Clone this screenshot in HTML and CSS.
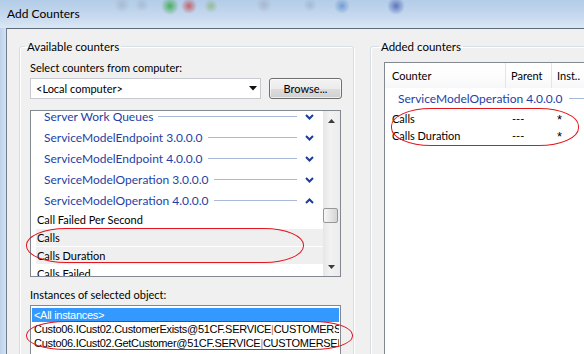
FILE: index.html
```html
<!DOCTYPE html>
<html lang="en">
<head>
    <meta charset="UTF-8">
    <title>Add Counters</title>
    <link rel="stylesheet" href="styles.css">
</head>
<body>

<div class="window">

    <div class="titlebar">Add Counters</div>

    <div class="frame">
        <div class="frame-edge"></div>

        <div class="client">

            <fieldset class="group group-left">
                <legend>Available counters</legend>

                <div class="label">Select counters from computer:</div>
                <div class="picker">
                    <div class="combo">
                        <span>&lt;Local computer&gt;</span>
                        <svg class="combo-arrow" width="8" height="5" viewBox="0 0 8 5"><path d="M0 0 H8 L4 4.5 Z" fill="#111"/></svg>
                    </div>
                    <div class="btn">Browse...</div>
                </div>

                <div class="listbox counters">
                    <div class="items">
                        <div class="cat cat-first">
                            <span>Server Work Queues</span><i class="rule"></i>
                            <svg class="chev" width="9" height="6" viewBox="0 0 9 6"><path d="M1 1 L4.5 4.5 L8 1" stroke="#1d3c9c" stroke-width="2" fill="none"/></svg>
                        </div>
                        <div class="cat">
                            <span>ServiceModelEndpoint 3.0.0.0</span><i class="rule"></i>
                            <svg class="chev" width="9" height="6" viewBox="0 0 9 6"><path d="M1 1 L4.5 4.5 L8 1" stroke="#1d3c9c" stroke-width="2" fill="none"/></svg>
                        </div>
                        <div class="cat">
                            <span>ServiceModelEndpoint 4.0.0.0</span><i class="rule"></i>
                            <svg class="chev" width="9" height="6" viewBox="0 0 9 6"><path d="M1 1 L4.5 4.5 L8 1" stroke="#1d3c9c" stroke-width="2" fill="none"/></svg>
                        </div>
                        <div class="cat">
                            <span>ServiceModelOperation 3.0.0.0</span><i class="rule"></i>
                            <svg class="chev" width="9" height="6" viewBox="0 0 9 6"><path d="M1 1 L4.5 4.5 L8 1" stroke="#1d3c9c" stroke-width="2" fill="none"/></svg>
                        </div>
                        <div class="cat">
                            <span>ServiceModelOperation 4.0.0.0</span><i class="rule"></i>
                            <svg class="chev" width="9" height="6" viewBox="0 0 9 6"><path d="M1 5 L4.5 1.5 L8 5" stroke="#1d3c9c" stroke-width="2" fill="none"/></svg>
                        </div>
                        <div class="row">Call Failed Per Second</div>
                        <div class="row hl">Calls</div>
                        <div class="row hl">Calls Duration</div>
                        <div class="row">Calls Failed</div>
                    </div>
                    <div class="vscroll">
                        <div class="arrow-cell">
                            <svg width="7" height="4" viewBox="0 0 7 4"><path d="M0 4 L3.5 0 L7 4 Z" fill="#3c3c3c"/></svg>
                        </div>
                        <div class="thumb"></div>
                        <div class="track"></div>
                        <div class="arrow-cell">
                            <svg width="7" height="4" viewBox="0 0 7 4"><path d="M0 0 L3.5 4 L7 0 Z" fill="#3c3c3c"/></svg>
                        </div>
                    </div>
                </div>

                <div class="label label-inst">Instances of selected object:</div>
                <div class="listbox instances">
                    <div class="inst selected">&lt;All instances&gt;</div>
                    <div class="inst">Custo06.ICust02.CustomerExists@51CF.SERVICE<span class="pipe">|</span>CUSTOMERSERVICE</div>
                    <div class="inst">Custo06.ICust02.GetCustomer@51CF.SERVICE<span class="pipe">|</span>CUSTOMERSERVICE</div>
                </div>
            </fieldset>

            <fieldset class="group group-right">
                <legend>Added counters</legend>

                <div class="added">
                    <div class="added-head">
                        <div class="col col-counter">Counter</div>
                        <div class="col col-parent">Parent</div>
                        <div class="col col-inst">Inst..</div>
                    </div>
                    <div class="added-cat">
                        <span>ServiceModelOperation 4.0.0.0</span><i class="rule"></i>
                    </div>
                    <div class="added-row">
                        <div class="col col-counter">Calls</div>
                        <div class="col col-parent">---</div>
                        <div class="col col-inst star">*</div>
                    </div>
                    <div class="added-row">
                        <div class="col col-counter">Calls Duration</div>
                        <div class="col col-parent">---</div>
                        <div class="col col-inst star">*</div>
                    </div>
                </div>
            </fieldset>

            <!-- red marks drawn over the screenshot -->
            <div class="mark mark-calls"></div>
            <div class="mark mark-inst"></div>
            <div class="mark mark-added"></div>
        </div>
    </div>

</div>

</body>
</html>
```

FILE: styles.css
```css
html, body {
    margin: 0;
    padding: 0;
}

body {
    width: 584px;
    height: 354px;
    overflow: hidden;
    background-color: #f0f0f0;
    font-family: Lato, "Liberation Sans", sans-serif;
    font-size: 11px;
    color: #000;
}

.window {
    width: 584px;
    height: 354px;
    display: flex;
    flex-direction: column;
}

.titlebar {
    height: 28px;
    line-height: 28px;
    padding-left: 7px;
    font-size: 12px;
    flex: none;
    background:
        radial-gradient(circle at 170px 6px, rgba(56, 168, 72, 0.85) 0, rgba(56, 168, 72, 0) 9px),
        radial-gradient(circle at 189px 6px, rgba(196, 64, 70, 0.75) 0, rgba(196, 64, 70, 0) 8px),
        radial-gradient(circle at 211px 6px, rgba(120, 170, 80, 0.55) 0, rgba(120, 170, 80, 0) 7px),
        radial-gradient(circle at 122px 5px, rgba(150, 165, 185, 0.5) 0, rgba(150, 165, 185, 0) 8px),
        radial-gradient(circle at 142px 5px, rgba(150, 165, 185, 0.45) 0, rgba(150, 165, 185, 0) 7px),
        radial-gradient(circle at 264px 5px, rgba(150, 160, 180, 0.5) 0, rgba(150, 160, 180, 0) 8px),
        radial-gradient(circle at 310px 5px, rgba(140, 160, 190, 0.45) 0, rgba(140, 160, 190, 0) 7px),
        radial-gradient(circle at 342px 6px, rgba(90, 140, 200, 0.75) 0, rgba(90, 140, 200, 0) 8px),
        radial-gradient(circle at 396px 6px, rgba(70, 95, 175, 0.8) 0, rgba(70, 95, 175, 0) 9px),
        linear-gradient(#b3cce8, #c5d8ee 55%, #dbe7f4);
}

.frame {
    flex: 1;
    display: flex;
    min-height: 0;
}

.frame-edge {
    width: 6px;
    flex: none;
    background: linear-gradient(90deg, #bcd2ea, #d3e2f2);
}

.client {
    flex: 1;
    position: relative;
    display: flex;
    gap: 16px;
    align-items: flex-start;
    padding: 10px 0 0 12px;
    border-left: 1px solid #6f7d8c;
    border-top: 1px solid #5f6b78;
    overflow: hidden;
}

.group {
    margin: 0;
    padding: 6px 0 0 10px;
    border: 1px solid #d5dfe5;
    border-radius: 3px;
    box-shadow: inset 1px 1px 0 #fff, 1px 1px 0 #fff;
    min-width: 0;
    flex: none;
}

.group legend {
    padding: 0 2px;
    margin-left: -5px;
    line-height: 15px;
    font-size: 11.5px;
}

.group-left {
    width: 335px;
    box-sizing: border-box;
    height: 330px;
}

.group-right {
    width: 240px;
    height: 330px;
    box-sizing: border-box;
    padding: 8px 0 0 13px;
}

.label {
    line-height: 15px;
}

.picker {
    display: flex;
    gap: 8px;
    margin-top: 3px;
}

.combo {
    width: 231px;
    height: 21px;
    box-sizing: border-box;
    border: 1px solid #c7c9cf;
    background-color: #fff;
    display: flex;
    align-items: center;
    justify-content: space-between;
    padding: 0 3px 0 5px;
}

.btn {
    width: 73px;
    height: 21px;
    box-sizing: border-box;
    border: 1px solid #707070;
    border-radius: 3px;
    background: linear-gradient(#f3f3f3, #ebebeb 50%, #dddddd 51%, #d0d0d0);
    box-shadow: inset 0 0 0 1px rgba(255, 255, 255, 0.6);
    text-align: center;
    line-height: 19px;
}

.listbox {
    border: 1px solid #828790;
    background-color: #fff;
    box-sizing: border-box;
    width: 311px;
}

.counters {
    height: 167px;
    margin-top: 11px;
    display: flex;
    overflow: hidden;
}

.items {
    width: 292px;
    flex: none;
}

.cat {
    height: 21px;
    display: flex;
    align-items: center;
    padding-left: 13px;
    color: #1e3fa6;
    font-size: 12px;
}

.cat-first {
    margin-top: -5px;
}

.rule {
    flex: 1;
    height: 1px;
    margin-left: 5px;
    background-color: #a9b9d9;
}

.chev {
    margin: 0 9px 0 8px;
}

.row {
    height: 17px;
    line-height: 17px;
    margin: 0 0 1px 5px;
    padding-left: 1px;
}

.row.hl {
    background-color: #efefef;
}

.vscroll {
    width: 17px;
    flex: none;
    display: flex;
    flex-direction: column;
    align-items: center;
    background: linear-gradient(90deg, #e6e6e6, #f2f2f2 40%, #ececec);
}

.arrow-cell {
    height: 19px;
    width: 17px;
    display: flex;
    align-items: center;
    justify-content: center;
}

.thumb {
    width: 15px;
    height: 15px;
    margin-top: 78px;
    box-sizing: border-box;
    border: 1px solid #979797;
    border-radius: 2px;
    background: linear-gradient(90deg, #f6f6f6, #e6e6e6 50%, #d4d4d4);
    align-self: flex-start;
}

.track {
    flex: 1;
}

.label-inst {
    margin-top: 10px;
}

.instances {
    margin-top: 3px;
    height: 70px;
    padding: 2px 1px 0 1px;
    overflow: hidden;
    font-family: "Liberation Sans", sans-serif;
    font-size: 11px;
    letter-spacing: -0.3px;
}

.inst {
    height: 14px;
    line-height: 14px;
    padding-left: 2px;
    white-space: nowrap;
    overflow: hidden;
}

.inst.selected {
    background-color: #3399ff;
    color: #fff;
}

.pipe {
    color: #c47a2c;
}

.added {
    width: 240px;
    height: 300px;
    background-color: #fff;
    border-left: 1px solid #828790;
    border-top: 1px solid #828790;
}

.added-head {
    display: flex;
    height: 25px;
    align-items: center;
    background: linear-gradient(#fff, #fdfdfd 50%, #f6f7f9);
}

.added-head .col {
    height: 25px;
    line-height: 25px;
    border-right: 1px solid #e3e5e9;
}

.col {
    box-sizing: border-box;
    white-space: nowrap;
}

.col-counter {
    width: 121px;
    padding-left: 7px;
}

.col-parent {
    width: 46px;
    padding-left: 5px;
}

.col-inst {
    width: 60px;
    padding-left: 5px;
}

.star {
    font-family: "Liberation Sans", sans-serif;
    font-size: 13px;
    line-height: 19px;
}

.added-cat {
    height: 21px;
    display: flex;
    align-items: center;
    padding-left: 13px;
    margin-bottom: 1px;
    color: #1e3fa6;
    font-size: 12px;
}

.added-cat .rule {
    margin-left: 6px;
}

.added-row {
    display: flex;
    height: 17px;
    line-height: 17px;
}

.added-row .col-parent {
    padding-left: 6px;
}

.mark {
    position: absolute;
    border: 1px solid #e3161e;
}

.mark-calls {
    left: 19px;
    top: 199px;
    width: 276px;
    height: 33px;
    border-radius: 40px / 17px;
}

.mark-inst {
    left: 19px;
    top: 292px;
    width: 325px;
    height: 27px;
    border-radius: 40px / 14px;
}

.mark-added {
    left: 384px;
    top: 79px;
    width: 186px;
    height: 36px;
    border-radius: 40px / 18px;
}
```
